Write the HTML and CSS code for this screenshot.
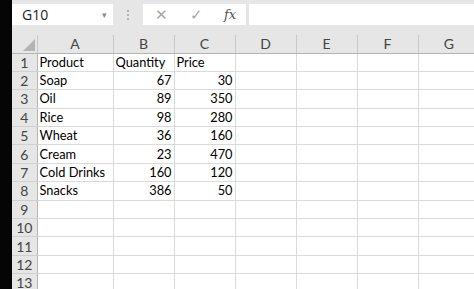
FILE: index.html
```html
<!DOCTYPE html>
<html lang="en">
<head>
  <meta charset="UTF-8">
  <title>Book1 - Excel</title>
  <link rel="stylesheet" href="styles.css">
</head>
<body>
  <div class="edge"></div>
  <div class="app">
    <!-- Formula bar -->
    <div class="formula-bar">
      <div class="name-box">
        <span>G10</span>
        <span class="caret">&#9662;</span>
      </div>
      <div class="grip"><i></i><i></i><i></i></div>
      <div class="fx-box">
        <span class="fx-cancel">&#10005;</span>
        <span class="fx-enter">&#10003;</span>
        <span class="fx-label">fx</span>
      </div>
      <div class="fx-input"></div>
    </div>

    <!-- Sheet grid -->
    <table class="sheet">
      <colgroup>
        <col class="c-head"><col class="c-a"><col class="c-n"><col class="c-n"><col class="c-n"><col class="c-n"><col class="c-n"><col class="c-n">
      </colgroup>
      <thead>
        <tr>
          <th class="corner"><span class="tri"></span></th>
          <th>A</th><th>B</th><th>C</th><th>D</th><th>E</th><th>F</th><th>G</th>
        </tr>
      </thead>
      <tbody>
        <tr><th>1</th><td>Product</td><td>Quantity</td><td>Price</td><td></td><td></td><td></td><td></td></tr>
        <tr><th>2</th><td>Soap</td><td class="num">67</td><td class="num">30</td><td></td><td></td><td></td><td></td></tr>
        <tr><th>3</th><td>Oil</td><td class="num">89</td><td class="num">350</td><td></td><td></td><td></td><td></td></tr>
        <tr><th>4</th><td>Rice</td><td class="num">98</td><td class="num">280</td><td></td><td></td><td></td><td></td></tr>
        <tr><th>5</th><td>Wheat</td><td class="num">36</td><td class="num">160</td><td></td><td></td><td></td><td></td></tr>
        <tr><th>6</th><td>Cream</td><td class="num">23</td><td class="num">470</td><td></td><td></td><td></td><td></td></tr>
        <tr><th>7</th><td>Cold Drinks</td><td class="num">160</td><td class="num">120</td><td></td><td></td><td></td><td></td></tr>
        <tr><th>8</th><td>Snacks</td><td class="num">386</td><td class="num">50</td><td></td><td></td><td></td><td></td></tr>
        <tr><th>9</th><td></td><td></td><td></td><td></td><td></td><td></td><td></td></tr>
        <tr><th>10</th><td></td><td></td><td></td><td></td><td></td><td></td><td></td></tr>
        <tr><th>11</th><td></td><td></td><td></td><td></td><td></td><td></td><td></td></tr>
        <tr><th>12</th><td></td><td></td><td></td><td></td><td></td><td></td><td></td></tr>
        <tr><th>13</th><td></td><td></td><td></td><td></td><td></td><td></td><td></td></tr>
      </tbody>
    </table>
  </div>
</body>
</html>
```

FILE: styles.css
```css
/* Global */
* { margin: 0; padding: 0; box-sizing: border-box; }
body {
  display: flex;
  height: 289px;
  overflow: hidden;
  background: #fff;
  font-family: Lato, "Open Sans", sans-serif;
  color: #111;
}
.edge {
  width: 12px;
  flex: none;
  background: #050505;
}
.app {
  flex: 1;
  min-width: 0;
  overflow: hidden;
  background: #e6e6e6;
}

/* ---------- Formula bar ---------- */
.formula-bar {
  display: flex;
  align-items: flex-start;
  height: 35px;
  padding-top: 4px;
}
.name-box {
  width: 101px;
  height: 21px;
  background: #fff;
  display: flex;
  align-items: center;
  justify-content: space-between;
  padding: 0 6px 0 10px;
  font-family: "Open Sans", sans-serif;
  font-size: 14px;
  color: #222;
}
.name-box .caret {
  font-size: 9px;
  color: #8a8a8a;
}
.grip {
  width: 30px;
  height: 21px;
  display: flex;
  flex-direction: column;
  align-items: center;
  justify-content: center;
  gap: 2px;
}
.grip i {
  width: 2px;
  height: 2px;
  background: #b3b3b3;
}
.fx-box {
  width: 103px;
  height: 21px;
  background: #fff;
  display: flex;
  align-items: center;
  padding-left: 12px;
  color: #a6a6a6;
}
.fx-cancel { font-size: 15px; width: 35px; }
.fx-enter { font-size: 15px; width: 34px; }
.fx-label {
  font-family: "DejaVu Serif", serif;
  font-style: italic;
  font-size: 13px;
  color: #555;
}
.fx-input {
  flex: 1;
  height: 21px;
  margin-left: 3px;
  background: #fff;
}

/* ---------- Sheet ---------- */
.sheet {
  border-collapse: collapse;
  table-layout: fixed;
  width: 467px;
  background: #fff;
  font-size: 12.8px;
  color: #000;
}
.c-head { width: 25px; }
.c-a { width: 76px; }
.c-n { width: 61px; }
.sheet thead th {
  height: 18px;
  background: #e6e6e6;
  font-weight: normal;
  color: #444;
  font-size: 14px;
  border-left: 1px solid #c8c8c8;
  border-bottom: 1px solid #b4b4b4;
}
.sheet thead th.corner {
  border-left: none;
  position: relative;
}
.tri {
  position: absolute;
  right: 2px;
  bottom: 2px;
  border-left: 12px solid transparent;
  border-bottom: 12px solid #b4b4b4;
}
.sheet tbody tr { height: 18.4px; }
.sheet tbody th {
  background: #e6e6e6;
  font-weight: normal;
  color: #444;
  font-size: 14px;
  border-right: 1px solid #b4b4b4;
  border-bottom: 1px solid #d0d0d0;
}
.sheet td {
  padding: 0 2px 0 2px;
  white-space: nowrap;
  border: 1px solid #dadada;
  line-height: 17px;
}
.sheet td.num { text-align: right; }
```
